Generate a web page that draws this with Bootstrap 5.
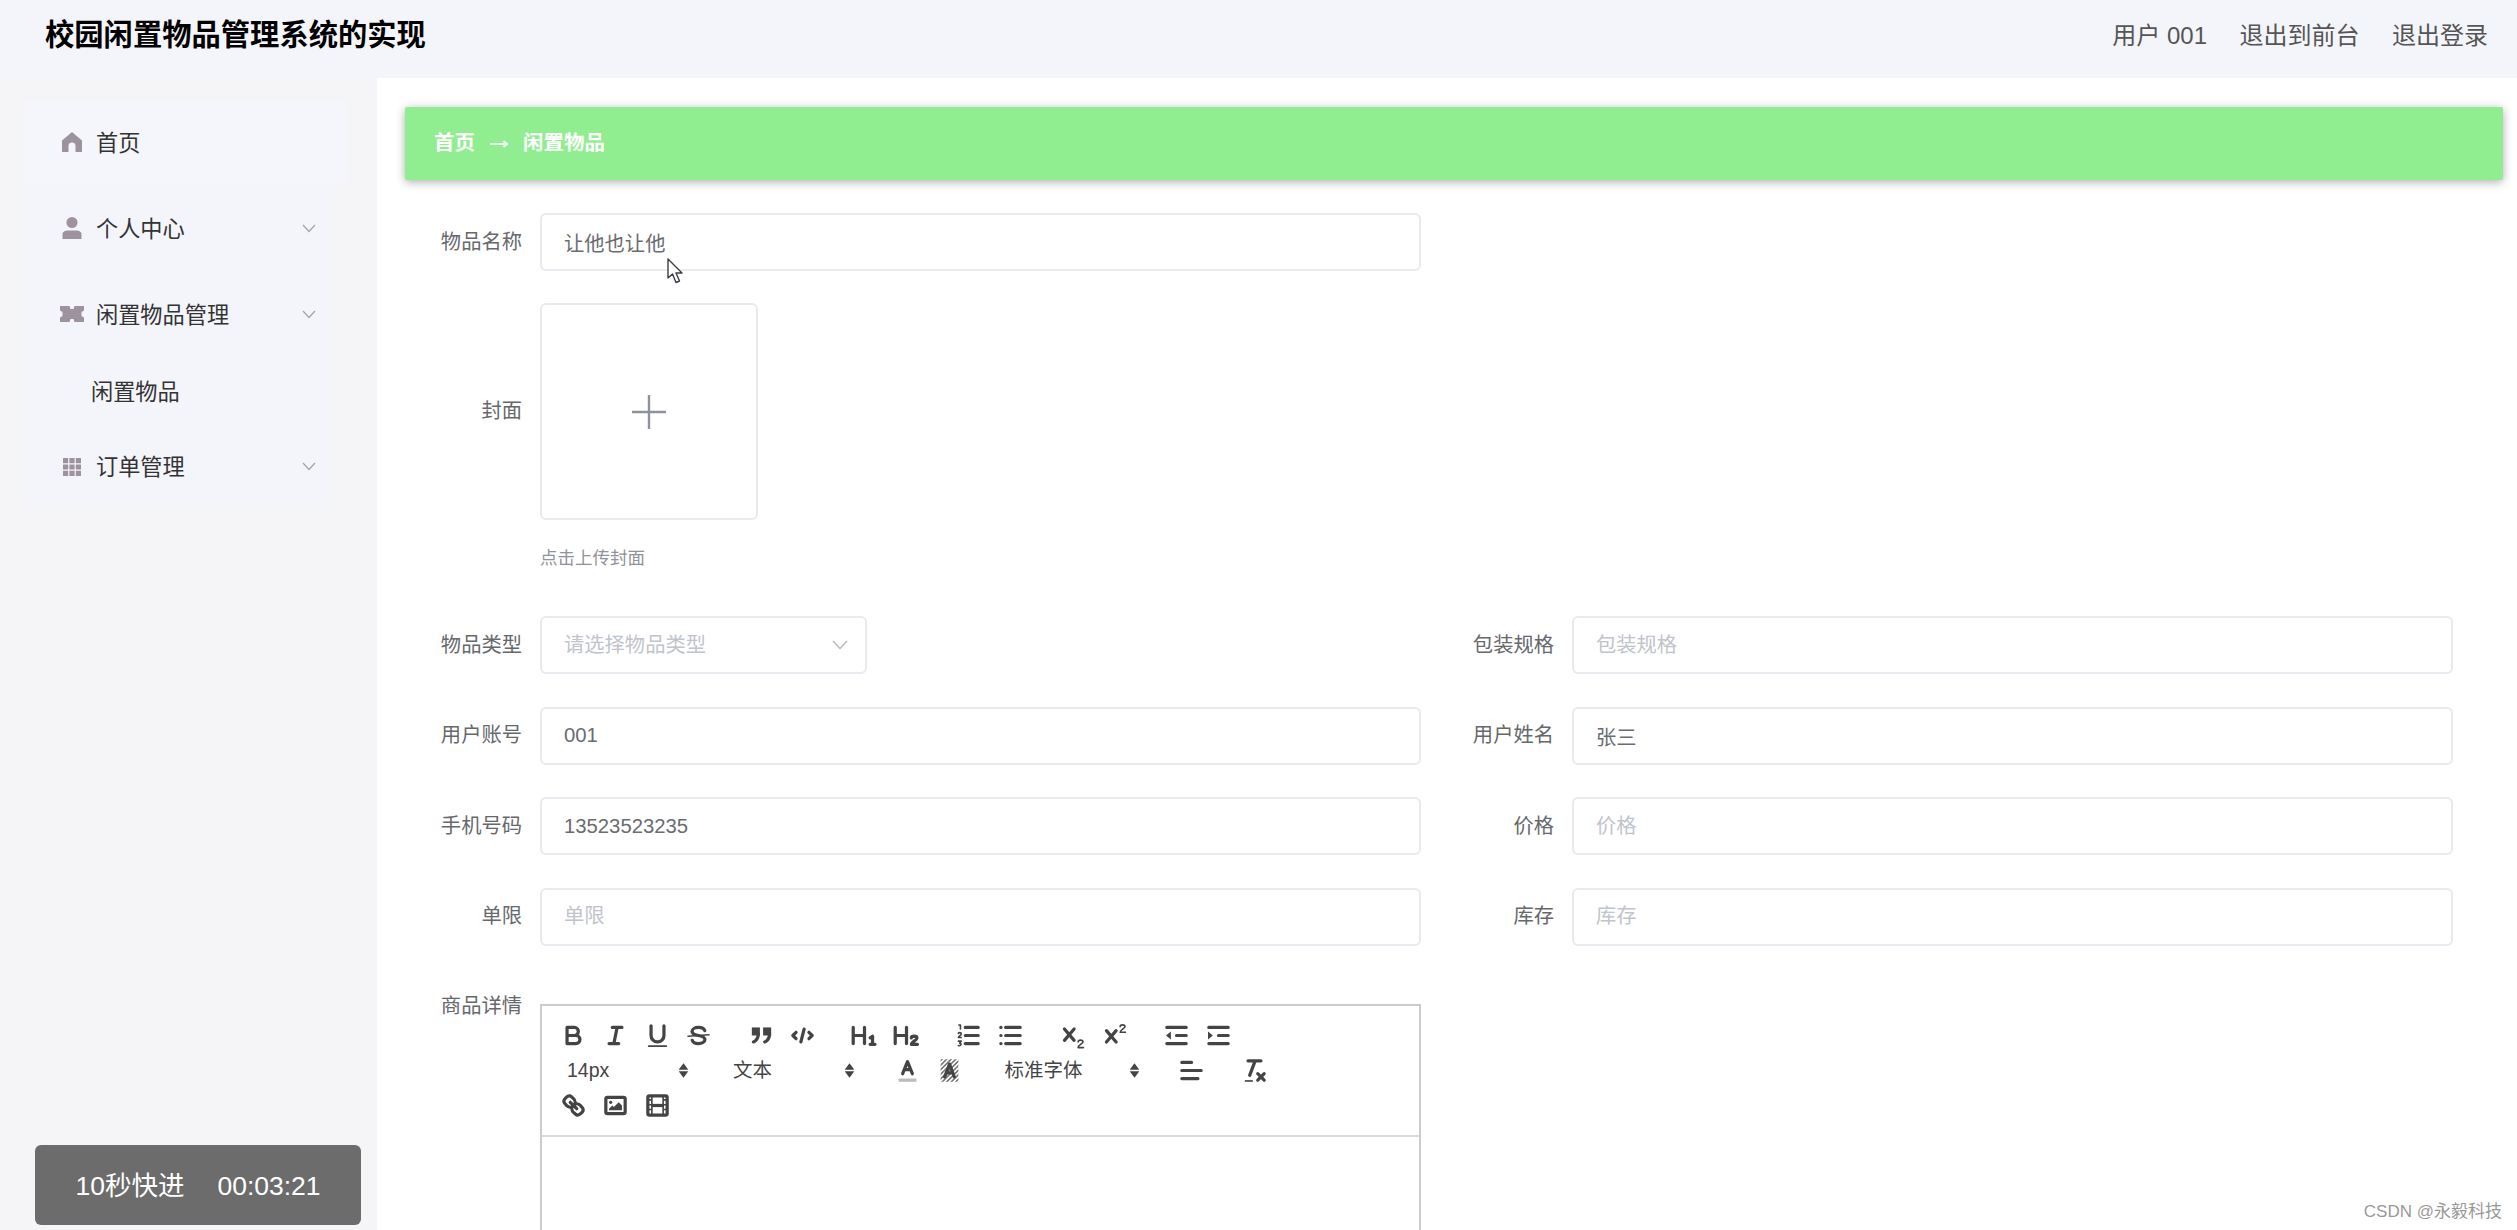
<!DOCTYPE html>
<html lang="zh-CN">
<head>
<meta charset="utf-8">
<title>校园闲置物品管理系统的实现</title>
<link href="https://cdn.jsdelivr.net/npm/bootstrap@5.3.0/dist/css/bootstrap.min.css" rel="stylesheet">
<style>
html,body{height:1230px;overflow:hidden;margin:0;background:#fff;font-family:"Liberation Sans","Noto Sans CJK SC",sans-serif}
.top-bar{height:78px;background:#f4f5fa;padding:0 29px 0 45px}
.app-title{font-size:29.3px;font-weight:700;color:#000;line-height:1;margin:0 0 8px}
.top-links{gap:32.5px;font-size:24px;color:#555;margin-bottom:6px}
.shell{height:1152px;overflow:hidden}
.side{width:377px;background:#f5f4f7;padding:22px 0 0 24px;flex:none}
.side-panel{width:308px;height:408px;background:#f4f5fb}
.side-item{padding:3px 16px 0 36px;font-size:22.2px;color:#333;line-height:1}
.side-home{height:85px;width:322px;background:#f5f6fc}
.h-87{height:87px}.h-85{height:85px}.h-69{height:69px}.h-82{height:82px}
.side-sub{padding-left:67px}
.side-ic{width:24px;height:24px;margin-right:12px;fill:#9e929f;flex:none;position:relative;top:-2px}
.side-chev{margin-left:auto;width:14px;height:9px;fill:none;stroke:#a5a5ab;stroke-width:1.3;position:relative;top:-2px}
.main-area{padding:29px 14px 0 28px;flex:1;min-width:0}
.crumb{height:73px;background:#90ee90;box-shadow:0 2px 10px rgba(0,0,0,.32);padding-left:29px;color:#fff;font-size:20.5px;font-weight:700;border-radius:2px;margin-bottom:33px}
.crumb-arrow{width:20px;height:10px;margin:0 14px 0 14px;stroke:#f4fff4;fill:none;stroke-width:2}
.fld{width:1032px;flex:none}
.fld-label{width:117px;margin-right:18px;text-align:right;font-size:20.3px;color:#66686c;flex:none}
.fld-input.form-control{width:881px;height:58px;border:2px solid #e8eaef;border-radius:6px;padding:0 22px;font-size:20.3px;color:#6a6c70;box-shadow:none;background:#fff}
.fld-input.form-control::placeholder{color:#c0c4cc;opacity:1}
.pick{width:327px!important;color:#c0c4cc!important}
.pick svg{margin-left:auto;width:16px;height:10px;fill:none;stroke:#b4b8c0;stroke-width:1.4;margin-right:-5px}
.row-name{margin-bottom:32px}
.row-gap{margin-bottom:32.5px}
.upload-box{width:218px;height:217px;border:2px solid #e8eaef;border-radius:6px;background:#fff}
.upload-box svg{width:36px;height:36px;stroke:#8c939d;stroke-width:2.4;fill:none}
.upload-tip{margin:26px 0 46px 135px;font-size:17.5px;line-height:24px;color:#909399}
.over-cursor{position:absolute;left:127px;top:45px;width:18px;height:26px;z-index:2}
.editor-row{padding-top:45px}
.editor-wrap{margin-top:13.5px;width:881px;border:2px solid #ccc;border-bottom:0;height:226px}
.ed-bar{height:131px;border-bottom:2px solid #dcdcdc;padding:12px 0 0 11px}
.ed-line{height:35px}
.ed-btn{width:41.7px;height:35px;flex:none}
.ed-btn svg{width:29px;height:29px}
.gap-g{margin-left:20.5px}
.ed-pick{height:35px;padding-left:14px;font-size:19.5px;color:#444;flex:none}
.ed-pick svg{width:29px;height:29px;margin-left:auto;margin-right:-4px}
.w-141{width:141px}.w-155{width:155px}
.ml-25{margin-left:25px}.ml-27{margin-left:27px}.ml-20{margin-left:20px}.ml-22{margin-left:22px}
.st{stroke:#444;stroke-width:2;fill:none;stroke-linecap:round;stroke-linejoin:round}
.st-thin{stroke:#444;stroke-width:1;fill:none;stroke-linecap:round;stroke-linejoin:round}
.fl{fill:#444;stroke:none}
.skip-toast{position:absolute;left:35px;top:1145px;width:326px;height:80px;padding-top:3px;background:#6c6c6c;border-radius:6px;color:#fff;font-size:26.5px;gap:33px;z-index:5}
.mark-csdn{position:absolute;right:15px;top:1201px;font-size:17px;line-height:22px;color:#999;z-index:5}
</style>
</head>
<body>
<header class="top-bar d-flex align-items-center justify-content-between">
  <h1 class="app-title">校园闲置物品管理系统的实现</h1>
  <div class="top-links d-flex align-items-center"><span>用户 001</span><span>退出到前台</span><span>退出登录</span></div>
</header>
<div class="shell d-flex">
  <aside class="side">
    <div class="side-panel">
      <div class="side-item side-home d-flex align-items-center">
        <svg class="side-ic" viewBox="0 0 24 24"><path d="M12 2 L22 10.500 V22 H15.500 V16 A3.500 3.500 0 0 0 8.500 16 V22 H2 V10.500 Z"/></svg>首页
      </div>
      <div class="side-item h-87 d-flex align-items-center">
        <svg class="side-ic" viewBox="0 0 24 24"><circle cx="12" cy="6.500" r="5.500"/><path d="M2.500 23 V18.500 C2.500 15.500 5 14.500 8 14.500 H16 C19 14.500 21.500 15.500 21.500 18.500 V23 Z"/></svg>个人中心
        <svg class="side-chev" viewBox="0 0 14 9"><polyline points="1 1 7 7.500 13 1"/></svg>
      </div>
      <div class="side-item h-85 d-flex align-items-center">
        <svg class="side-ic" viewBox="0 0 24 24"><path d="M0 4H9.500 L10.500 7 H13.500 L14.500 4 H24 V8.500 L21.500 10 V14 L24 15.500 V20 H14.500 L13.500 17 H10.500 L9.500 20 H0 V15.500 L2.500 14 V10 L0 8.500Z"/></svg>闲置物品管理
        <svg class="side-chev" viewBox="0 0 14 9"><polyline points="1 1 7 7.500 13 1"/></svg>
      </div>
      <div class="side-item side-sub h-69 d-flex align-items-center">闲置物品</div>
      <div class="side-item h-82 d-flex align-items-center">
        <svg class="side-ic" viewBox="0 0 24 24"><path d="M3 3h5.200v5.200H3zM9.400 3h5.200v5.200H9.400zM15.800 3H21v5.200h-5.200zM3 9.400h5.200v5.200H3zM9.400 9.400h5.200v5.200H9.400zM15.800 9.400H21v5.200h-5.200zM3 15.800h5.200V21H3zM9.400 15.800h5.200V21H9.400zM15.800 15.800H21V21h-5.200z"/></svg>订单管理
        <svg class="side-chev" viewBox="0 0 14 9"><polyline points="1 1 7 7.500 13 1"/></svg>
      </div>
    </div>
  </aside>
  <main class="main-area">
    <div class="crumb d-flex align-items-center"><span>首页</span>
      <svg class="crumb-arrow" viewBox="0 0 20 10"><path d="M1 5H18M14.500 2 L18 5 L14.500 8"/></svg>
      <span>闲置物品</span></div>

    <div class="d-flex align-items-center row-name">
      <label class="fld-label">物品名称</label>
      <div class="position-relative">
        <input class="form-control fld-input" value="让他也让他">
        <svg class="over-cursor" viewBox="0 0 18 26"><path d="M1 1 V20 L5.500 16 L9 24.500 L12.500 23 L9 15 H15 Z" fill="#fff" stroke="#3a3d46" stroke-width="1.400" stroke-linejoin="round"/></svg>
      </div>
    </div>
    <div class="d-flex align-items-center">
      <label class="fld-label">封面</label>
      <div class="upload-box d-flex align-items-center justify-content-center"><svg viewBox="0 0 36 36"><path d="M18 1V35M1 18H35"/></svg></div>
    </div>
    <div class="upload-tip">点击上传封面</div>

    <div class="d-flex row-gap">
      <div class="fld d-flex align-items-center"><label class="fld-label">物品类型</label>
        <div class="form-control fld-input pick d-flex align-items-center"><span>请选择物品类型</span><svg viewBox="0 0 16 10"><polyline points="1 1 8 8.500 15 1"/></svg></div></div>
      <div class="fld d-flex align-items-center"><label class="fld-label">包装规格</label><input class="form-control fld-input" placeholder="包装规格"></div>
    </div>
    <div class="d-flex row-gap">
      <div class="fld d-flex align-items-center"><label class="fld-label">用户账号</label><input class="form-control fld-input" value="001"></div>
      <div class="fld d-flex align-items-center"><label class="fld-label">用户姓名</label><input class="form-control fld-input" value="张三"></div>
    </div>
    <div class="d-flex row-gap">
      <div class="fld d-flex align-items-center"><label class="fld-label">手机号码</label><input class="form-control fld-input" value="13523523235"></div>
      <div class="fld d-flex align-items-center"><label class="fld-label">价格</label><input class="form-control fld-input" placeholder="价格"></div>
    </div>
    <div class="d-flex">
      <div class="fld d-flex align-items-center"><label class="fld-label">单限</label><input class="form-control fld-input" placeholder="单限"></div>
      <div class="fld d-flex align-items-center"><label class="fld-label">库存</label><input class="form-control fld-input" placeholder="库存"></div>
    </div>

    <div class="d-flex align-items-start editor-row">
      <label class="fld-label">商品详情</label>
      <div class="editor-wrap">
        <div class="ed-bar">
          <div class="ed-line d-flex align-items-center">
            <span class="ed-btn d-flex align-items-center justify-content-center"><svg viewBox="0 0 18 18"><path class="st" d="M5 4H9.500A2.500 2.500 0 0 1 9.500 9H5ZM5 9H10.500A2.500 2.500 0 0 1 10.500 14H5Z"/></svg></span>
            <span class="ed-btn d-flex align-items-center justify-content-center"><svg viewBox="0 0 18 18"><path class="st" d="M7 4H13M5 14H11M8 14 10 4"/></svg></span>
            <span class="ed-btn d-flex align-items-center justify-content-center"><svg viewBox="0 0 18 18"><path class="st" d="M5 3V9A4 4 0 0 0 13 9V3"/><rect class="fl" x="3" y="15" width="12" height="1.200" rx=".5"/></svg></span>
            <span class="ed-btn d-flex align-items-center justify-content-center"><svg viewBox="0 0 18 18"><path class="st-thin" d="M15.500 8.500 2.500 9.500"/><path class="st" d="M12.900 6C12.400 4.800 11 4 9 4 6.800 4 5 5 5 6.500 5 8 6.500 8.500 9 9 11.500 9.500 13 10 13 11.500 13 13 11.200 14 9 14 7 14 5.600 13.200 5.100 12"/></svg></span>
            <span class="ed-btn gap-g d-flex align-items-center justify-content-center"><svg viewBox="0 0 18 18"><rect class="fl" x="3" y="4" width="5" height="5"/><rect class="fl" x="10" y="4" width="5" height="5"/><path class="st" d="M7 8C7 12 4 13 4 13M14 8C14 12 11 13 11 13"/></svg></span>
            <span class="ed-btn d-flex align-items-center justify-content-center"><svg viewBox="0 0 18 18"><path class="st" d="M5 7 3 9 5 11M13 7 15 9 13 11M10 5 8 13"/></svg></span>
            <span class="ed-btn gap-g d-flex align-items-center justify-content-center"><svg viewBox="0 0 18 18"><path class="st" d="M2 4V14M9 4V14M2 9H9"/><path class="st" d="M12.500 10.500 14 9.500V14.500M12.500 14.500H15.500"/></svg></span>
            <span class="ed-btn d-flex align-items-center justify-content-center"><svg viewBox="0 0 18 18"><path class="st" d="M2 4V14M9 4V14M2 9H9"/><path class="st" d="M12 10.500C12 9 15.500 9 15.500 10.500 15.500 12 12 13 12 14.500H15.800"/></svg></span>
            <span class="ed-btn gap-g d-flex align-items-center justify-content-center"><svg viewBox="0 0 18 18"><path class="st" d="M7 4H15M7 9H15M7 14H15"/><path class="st-thin" d="M3 2.500H4V5M2.700 7.700C3 7 4.500 7 4.500 8 4.500 8.800 2.700 9.500 2.700 10.200H4.500M2.700 12.500H4.500L3.500 13.700C4.800 13.700 4.800 15.500 2.700 15.300"/></svg></span>
            <span class="ed-btn d-flex align-items-center justify-content-center"><svg viewBox="0 0 18 18"><path class="st" d="M6 4H15M6 9H15M6 14H15M3 4H3.100M3 9H3.100M3 14H3.100"/></svg></span>
            <span class="ed-btn gap-g d-flex align-items-center justify-content-center"><svg viewBox="0 0 18 18"><path class="st" d="M4 5 10 12M10 5 4 12"/><path class="st-thin" d="M12.500 13C12.500 11.500 15.500 11.500 15.500 13 15.500 14 12.500 15 12.500 16.500H15.800"/></svg></span>
            <span class="ed-btn d-flex align-items-center justify-content-center"><svg viewBox="0 0 18 18"><path class="st" d="M4 6 10 13M10 6 4 13"/><path class="st-thin" d="M12.500 3.500C12.500 2 15.500 2 15.500 3.500 15.500 4.500 12.500 5.500 12.500 7H15.800"/></svg></span>
            <span class="ed-btn gap-g d-flex align-items-center justify-content-center"><svg viewBox="0 0 18 18"><path class="st" d="M3 14H15M3 4H15M9 9H15"/><polygon class="fl" points="5.500 6.500 5.500 11.500 2.500 9"/></svg></span>
            <span class="ed-btn d-flex align-items-center justify-content-center"><svg viewBox="0 0 18 18"><path class="st" d="M3 14H15M3 4H15M9 9H15"/><polygon class="fl" points="2.500 6.500 2.500 11.500 5.500 9"/></svg></span>
          </div>
          <div class="ed-line d-flex align-items-center">
            <div class="ed-pick w-141 d-flex align-items-center"><span>14px</span><svg viewBox="0 0 18 18"><polygon class="fl" points="6 8.500 9 4.500 12 8.500"/><polygon class="fl" points="6 9.500 9 13.500 12 9.500"/></svg></div>
            <div class="ed-pick w-141 ml-25 d-flex align-items-center"><span>文本</span><svg viewBox="0 0 18 18"><polygon class="fl" points="6 8.500 9 4.500 12 8.500"/><polygon class="fl" points="6 9.500 9 13.500 12 9.500"/></svg></div>
            <span class="ed-btn ml-27 d-flex align-items-center justify-content-center"><svg viewBox="0 0 18 18"><path class="st" d="M6 11 9 3.500 12 11M7 8.500H11"/><path d="M3.500 15H14.500" stroke="#bbb" stroke-width="2"/></svg></span>
            <span class="ed-btn d-flex align-items-center justify-content-center"><svg viewBox="0 0 18 18"><defs><pattern id="hatch" width="2" height="2" patternUnits="userSpaceOnUse" patternTransform="rotate(45)"><rect width="1" height="2" fill="#777"/></pattern></defs><rect x="3.500" y="2" width="11" height="14" fill="url(#hatch)"/><path class="st" stroke-width="1.600" d="M6 13 9 5 12 13M7 10.500H11"/></svg></span>
            <div class="ed-pick w-155 ml-20 d-flex align-items-center"><span>标准字体</span><svg viewBox="0 0 18 18"><polygon class="fl" points="6 8.500 9 4.500 12 8.500"/><polygon class="fl" points="6 9.500 9 13.500 12 9.500"/></svg></div>
            <span class="ed-btn ml-25 d-flex align-items-center justify-content-center"><svg viewBox="0 0 18 18"><path class="st" d="M3 9H15M3 14H13M3 4H9"/></svg></span>
            <span class="ed-btn ml-22 d-flex align-items-center justify-content-center"><svg viewBox="0 0 18 18"><path class="st" d="M5 3H13M6 12 9.400 3M11 11 15 15M15 11 11 15"/><rect class="fl" x="3" y="15" width="5" height="1"/></svg></span>
          </div>
          <div class="ed-line d-flex align-items-center">
            <span class="ed-btn d-flex align-items-center justify-content-center"><svg viewBox="0 0 18 18"><path class="st" d="M7 7 11 11M8.900 4.600A3.500 3.500 0 0 1 9.300 9.300 3.500 3.500 0 0 1 4.600 8.900C3.200 7.500 2 6.400 4.200 4.200S7.500 3.200 8.900 4.600ZM13.400 9.100A3.500 3.500 0 0 0 8.700 8.700 3.500 3.500 0 0 0 9.100 13.400C10.500 14.800 11.600 16 13.800 13.800S14.800 10.500 13.400 9.100Z"/></svg></span>
            <span class="ed-btn d-flex align-items-center justify-content-center"><svg viewBox="0 0 18 18"><rect class="st" x="3" y="4" width="12" height="10" rx="1"/><circle class="fl" cx="6" cy="7" r="1"/><polygon class="fl" points="5 12 5 11 7 9 8 10 11 7 13 9 13 12"/></svg></span>
            <span class="ed-btn d-flex align-items-center justify-content-center"><svg viewBox="0 0 18 18"><rect class="st" x="3" y="3" width="12" height="12" rx="1"/><rect class="fl" x="5" y="3" width="1" height="12"/><rect class="fl" x="12" y="3" width="1" height="12"/><rect class="fl" x="5" y="8" width="8" height="2"/><path class="st-thin" d="M3 5.500H5M3 8.500H5M3 11.500H5M13 5.500H15M13 8.500H15M13 11.500H15"/></svg></span>
          </div>
        </div>
      </div>
    </div>
  </main>
</div>
<div class="skip-toast d-flex align-items-center justify-content-center"><span>10秒快进</span><span>00:03:21</span></div>
<div class="mark-csdn">CSDN @永毅科技</div>
</body>
</html>
